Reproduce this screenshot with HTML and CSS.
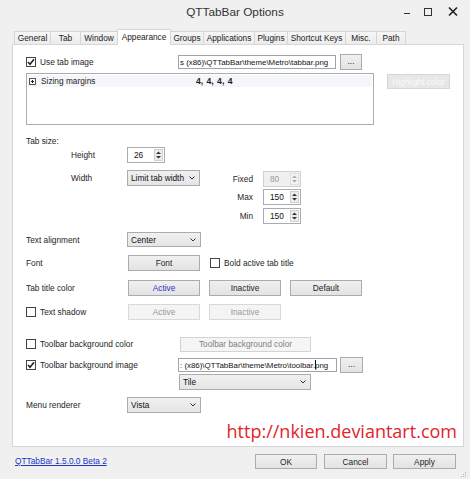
FILE: index.html
```html
<!DOCTYPE html>
<html>
<head>
<meta charset="utf-8">
<title>QTTabBar Options</title>
<link rel="stylesheet" href="styles.css">
</head>
<body>
<div class="window">
  <div class="titlebar">
    <div></div>
    <div class="title">QTTabBar Options</div>
    <div class="controls">
      <svg class="ctl" width="20" height="24" viewBox="0 0 20 24"><line x1="7" y1="13.5" x2="13" y2="13.5" stroke="#333" stroke-width="1"/></svg>
      <svg class="ctl" width="20" height="24" viewBox="0 0 20 24"><rect x="7.5" y="8.5" width="7" height="7" fill="none" stroke="#333" stroke-width="1"/></svg>
      <svg class="ctl close" width="20" height="24" viewBox="0 0 20 24"><path d="M6 7.5 L14 15.5 M14 7.5 L6 15.5" stroke="#222" stroke-width="1.7"/></svg>
    </div>
  </div>

  <div class="tabs">
    <div class="tab w-general">General</div>
    <div class="tab w-tab">Tab</div>
    <div class="tab w-window">Window</div>
    <div class="tab w-appearance active">Appearance</div>
    <div class="tab w-groups">Groups</div>
    <div class="tab w-apps">Applications</div>
    <div class="tab w-plugins">Plugins</div>
    <div class="tab w-keys">Shortcut Keys</div>
    <div class="tab w-misc">Misc.</div>
    <div class="tab w-path last">Path</div>
  </div>

  <div class="panel">
    <div class="row r1">
      <label class="chk col152"><span class="box"><svg width="8" height="8" viewBox="0 0 8 8"><polyline points="1,4 3,6.2 7,1.3" fill="none" stroke="#222" stroke-width="1.6"/></svg></span>Use tab image</label>
      <div class="textbox tb1"><span>s (x86)\QTTabBar\theme\Metro\tabbar.png</span></div>
      <div class="btn browse">...</div>
    </div>

    <div class="row r2">
      <div class="listbox">
        <div class="lrow">
          <svg class="plus" width="7" height="7" viewBox="0 0 7 7"><rect x="0.5" y="0.5" width="6" height="6" fill="#fff" stroke="#555"/><path d="M2 3.5 H5 M3.5 2 V5" stroke="#222" stroke-width="1"/></svg>
          <span class="lname">Sizing margins</span>
          <span class="lval">4, 4, 4, 4</span>
        </div>
      </div>
      <div class="btn hl">Highlight color</div>
    </div>

    <div class="row rts">Tab size:</div>

    <div class="row sz rh">
      <span></span>
      <span>Height</span>
      <div class="spinner"><span>26</span><div class="spin"><svg width="7" height="12" viewBox="0 0 7 12"><path d="M1 5 L3.5 2.5 L6 5 Z M1 7 L3.5 9.5 L6 7 Z" fill="#333"/></svg></div></div>
      <span></span>
    </div>
    <div class="row sz rw">
      <span></span>
      <span>Width</span>
      <div class="dropdown w73"><span>Limit tab width</span><svg width="6" height="4" viewBox="0 0 6 4"><polyline points="0.5,0.5 3,3 5.5,0.5" fill="none" stroke="#333" stroke-width="1"/></svg></div>
      <div class="side"><span>Fixed</span><div class="spinner disabled"><span>80</span><div class="spin"><svg width="7" height="12" viewBox="0 0 7 12"><path d="M1 5 L3.5 2.5 L6 5 Z M1 7 L3.5 9.5 L6 7 Z" fill="#aaa"/></svg></div></div></div>
    </div>
    <div class="row sz rmax">
      <span></span><span></span><span></span>
      <div class="side"><span>Max</span><div class="spinner"><span>150</span><div class="spin"><svg width="7" height="12" viewBox="0 0 7 12"><path d="M1 5 L3.5 2.5 L6 5 Z M1 7 L3.5 9.5 L6 7 Z" fill="#333"/></svg></div></div></div>
    </div>
    <div class="row sz rmin">
      <span></span><span></span><span></span>
      <div class="side"><span>Min</span><div class="spinner"><span>150</span><div class="spin"><svg width="7" height="12" viewBox="0 0 7 12"><path d="M1 5 L3.5 2.5 L6 5 Z M1 7 L3.5 9.5 L6 7 Z" fill="#333"/></svg></div></div></div>
    </div>

    <div class="row ral">
      <span class="col101">Text alignment</span>
      <div class="dropdown w74"><span>Center</span><svg width="6" height="4" viewBox="0 0 6 4"><polyline points="0.5,0.5 3,3 5.5,0.5" fill="none" stroke="#333" stroke-width="1"/></svg></div>
    </div>

    <div class="row rfont">
      <span class="col101">Font</span>
      <div class="btn b72 first">Font</div>
      <label class="chk bold"><span class="box"></span>Bold active tab title</label>
    </div>

    <div class="row rcolor">
      <span class="col101">Tab title color</span>
      <div class="btn b72 first blue">Active</div>
      <div class="btn b72">Inactive</div>
      <div class="btn b72">Default</div>
    </div>

    <div class="row rshadow">
      <label class="chk col101"><span class="box"></span>Text shadow</label>
      <div class="btn b72 first disabled">Active</div>
      <div class="btn b72 disabled">Inactive</div>
    </div>

    <div class="row rtbc">
      <label class="chk col154"><span class="box"></span>Toolbar background color</label>
      <div class="btn tbcbtn">Toolbar background color</div>
    </div>

    <div class="row rtbi">
      <label class="chk col152"><span class="box"><svg width="8" height="8" viewBox="0 0 8 8"><polyline points="1,4 3,6.2 7,1.3" fill="none" stroke="#222" stroke-width="1.6"/></svg></span>Toolbar background image</label>
      <div class="textbox tb2"><span>: (x86)\QTTabBar\theme\Metro\toolbar.<i class="caret"></i>png</span></div>
      <div class="btn browse2">...</div>
    </div>

    <div class="row rtile">
      <div class="dropdown w132"><span>Tile</span><svg width="6" height="4" viewBox="0 0 6 4"><polyline points="0.5,0.5 3,3 5.5,0.5" fill="none" stroke="#333" stroke-width="1"/></svg></div>
    </div>

    <div class="row rmenu">
      <span class="col101">Menu renderer</span>
      <div class="dropdown w74"><span>Vista</span><svg width="6" height="4" viewBox="0 0 6 4"><polyline points="0.5,0.5 3,3 5.5,0.5" fill="none" stroke="#333" stroke-width="1"/></svg></div>
    </div>

    <div class="row rwm">http://nkien.deviantart.com</div>
  </div>

  <div class="footer">
    <a class="link" href="#">QTTabBar 1.5.0.0 Beta 2</a>
    <div class="fbtns">
      <div class="btn ok">OK</div>
      <div class="btn cancel">Cancel</div>
      <div class="btn apply">Apply</div>
    </div>
    <svg class="grip" width="6" height="6" viewBox="0 0 6 6"><g fill="#b5b5b5"><rect x="4" y="0" width="1" height="1"/><rect x="2" y="2" width="1" height="1"/><rect x="4" y="2" width="1" height="1"/><rect x="0" y="4" width="1" height="1"/><rect x="2" y="4" width="1" height="1"/><rect x="4" y="4" width="1" height="1"/></g></svg>
  </div>
</div>
</body>
</html>
```
FILE: styles.css
```css
html, body {
  margin: 0;
  padding: 0;
}
body {
  width: 474px;
  height: 484px;
  overflow: hidden;
  background: #ffffff;
  font-family: "Liberation Sans", Arial, sans-serif;
  font-size: 8.3px;
  color: #1e1e1e;
}
.window {
  width: 470px;
  height: 479px;
  background: #f0f0f0;
  display: flex;
  flex-direction: column;
}

/* title bar */
.titlebar {
  height: 31px;
  display: grid;
  grid-template-columns: 1fr auto 1fr;
  align-items: start;
}
.title {
  font-size: 11.8px;
  line-height: 24px;
  color: #333;
}
.controls {
  justify-self: end;
  display: flex;
  padding-right: 7px;
}
.ctl { display: block; }
.close { margin-left: 6px; }

/* tabs */
.tabs {
  display: flex;
  align-items: flex-end;
  height: 13px;
  padding-left: 14px;
}
.tab {
  box-sizing: border-box;
  height: 13px;
  border: 1px solid #d6d6d6;
  border-bottom: none;
  margin-right: -1px;
  background: linear-gradient(#f6f6f6, #ececec);
  display: flex;
  align-items: center;
  justify-content: center;
  color: #222;
  white-space: nowrap;
}
.tab.active {
  height: 16px;
  margin-bottom: -1px;
  background: #ffffff;
  position: relative;
  z-index: 1;
  padding-bottom: 2px;
}
.w-general { width: 37px; }
.w-tab { width: 31px; }
.w-window { width: 38px; }
.w-appearance { width: 54px; }
.w-groups { width: 34px; }
.w-apps { width: 52px; }
.w-plugins { width: 34px; }
.w-keys { width: 59px; }
.w-misc { width: 32px; }
.w-path { width: 30px; }

/* panel */
.panel {
  margin-left: 12px;
  width: 452px;
  height: 403px;
  box-sizing: border-box;
  border: 1px solid #d6d6d6;
  background: #ffffff;
  padding-left: 13px;
  display: flex;
  flex-direction: column;
}
.row {
  display: flex;
  align-items: center;
  height: 16px;
  flex: none;
}
.col101 { width: 101px; flex: none; }
.col152 { width: 152px; flex: none; }
.col154 { width: 154px; flex: none; }

.chk {
  display: flex;
  align-items: center;
  white-space: nowrap;
}
.box {
  box-sizing: border-box;
  width: 10px;
  height: 10px;
  border: 1px solid #444;
  background: #fff;
  margin-right: 4px;
  display: flex;
  align-items: center;
  justify-content: center;
  flex: none;
}
.box svg { display: block; }

.btn {
  box-sizing: border-box;
  height: 16px;
  border: 1px solid #acacac;
  background: linear-gradient(#f0f0f0, #e3e3e3);
  display: flex;
  align-items: center;
  justify-content: center;
  color: #1e1e1e;
  white-space: nowrap;
  flex: none;
}
.btn.disabled {
  border-color: #d9d9d9;
  background: #f4f4f4;
  color: #9a9a9a;
}
.btn.blue { color: #3232c8; }

.textbox {
  box-sizing: border-box;
  height: 14px;
  border: 1px solid #9fa3ab;
  background: #fff;
  display: flex;
  justify-content: flex-start;
  align-items: center;
  overflow: hidden;
  white-space: nowrap;
  padding: 0 2px 0 1px;
  flex: none;
  color: #111;
  font-size: 7.9px;
  letter-spacing: 0px;
}
.caret {
  display: inline-block;
  width: 1px;
  height: 9px;
  background: #111;
  vertical-align: -1px;
  margin: 0 -1px 0 0;
}

.dropdown {
  box-sizing: border-box;
  height: 16px;
  border: 1px solid #acacac;
  background: linear-gradient(#f0f0f0, #e5e5e5);
  display: flex;
  align-items: center;
  justify-content: space-between;
  padding: 0 4px 0 3px;
  flex: none;
  white-space: nowrap;
  color: #111;
}
.dropdown svg { display: block; }
.w73 { width: 73px; }
.w74 { width: 74px; }
.w132 { width: 132px; }

.spinner {
  box-sizing: border-box;
  width: 38px;
  height: 16px;
  border: 1px solid #a9acb3;
  background: #fff;
  display: flex;
  align-items: center;
  justify-content: space-between;
  padding-left: 6px;
  padding-right: 1px;
  flex: none;
  color: #111;
}
.spin {
  box-sizing: border-box;
  width: 9px;
  height: 12px;
  border: 1px solid #d0d0d0;
  background: #eeeeee;
  display: flex;
  align-items: center;
  justify-content: center;
}
.spin svg { display: block; }
.spinner.disabled {
  background: #f0f0f0;
  border-color: #d0d0d0;
  color: #9a9a9a;
}
.spinner.disabled .spin { background: #f4f4f4; border-color: #e0e0e0; }

/* rows */
.r1 { margin-top: 9px; }
.tb1 { width: 158px; }
.browse { width: 22px; margin-left: 4px; padding-bottom: 3px; }
.browse2 { width: 23px; margin-left: 3px; padding-bottom: 3px; }

.r2 {
  margin-top: 3px;
  height: 52px;
  align-items: flex-start;
}
.listbox {
  box-sizing: border-box;
  width: 348px;
  height: 52px;
  border: 1px solid #a9acb3;
  background: #fff;
  padding: 1px;
}
.lrow {
  height: 12px;
  display: flex;
  align-items: center;
  background: #f4f6f9;
}
.plus { display: block; margin-left: 1px; margin-right: 5px; }
.lname { width: 155px; }
.lval { font-weight: bold; font-size: 8.6px; word-spacing: 1px; }
.hl {
  width: 63px;
  height: 15px;
  margin-left: 13px;
  margin-top: 1px;
  border-color: #d6d6d6;
  background: #e7e7e7;
  color: #fafafa;
}

.rts { margin-top: 10px; height: 11px; }

.sz {
  display: grid;
  grid-template-columns: 45px 56px 73px 101px;
  align-items: center;
}
.rh { margin-top: 1px; }
.rw { margin-top: 6px; }
.rmax { margin-top: 4px; }
.rmin { margin-top: 3px; }
.side {
  display: flex;
  align-items: center;
  justify-content: flex-end;
  gap: 10px;
}
.rw .side { margin-top: 2px; }

.ral { margin-top: 8px; height: 15px; }
.ral .dropdown { height: 15px; }
.rfont { margin-top: 8px; }
.b72 { width: 72px; margin-left: 9px; }
.b72.first { margin-left: 1px; }
.bold { margin-left: 10px; }
.rcolor { margin-top: 9px; }
.rshadow { margin-top: 8px; }
.rtbc { margin-top: 16px; }
.tbcbtn {
  width: 131px;
  height: 15px;
  border-color: #d3d3d3;
  background: #f5f5f5;
  color: #808080;
}
.rtbi { margin-top: 5px; }
.tb2 { width: 159px; }
.rtile { margin-top: 1px; padding-left: 153px; }
.rmenu { margin-top: 7px; }
.rwm {
  margin-top: 6px;
  height: 24px;
  justify-content: flex-end;
  padding-right: 6px;
  font-family: "Open Sans", "Liberation Sans", sans-serif;
  font-size: 18px;
  color: #e3232c;
}

/* footer */
.footer {
  flex: 1;
  display: flex;
  align-items: flex-start;
  padding-top: 7px;
  padding-right: 3px;
}
.link {
  margin-left: 15px;
  line-height: 15px;
  color: #1a35c8;
  text-decoration: underline;
}
.fbtns {
  margin-left: auto;
  display: flex;
}
.fbtns .btn { height: 15px; }
.ok { width: 62px; }
.cancel { width: 63px; margin-left: 7px; }
.apply { width: 63px; margin-left: 6px; }
.grip {
  display: block;
  margin-left: 5px;
  margin-top: 18px;
}
```
